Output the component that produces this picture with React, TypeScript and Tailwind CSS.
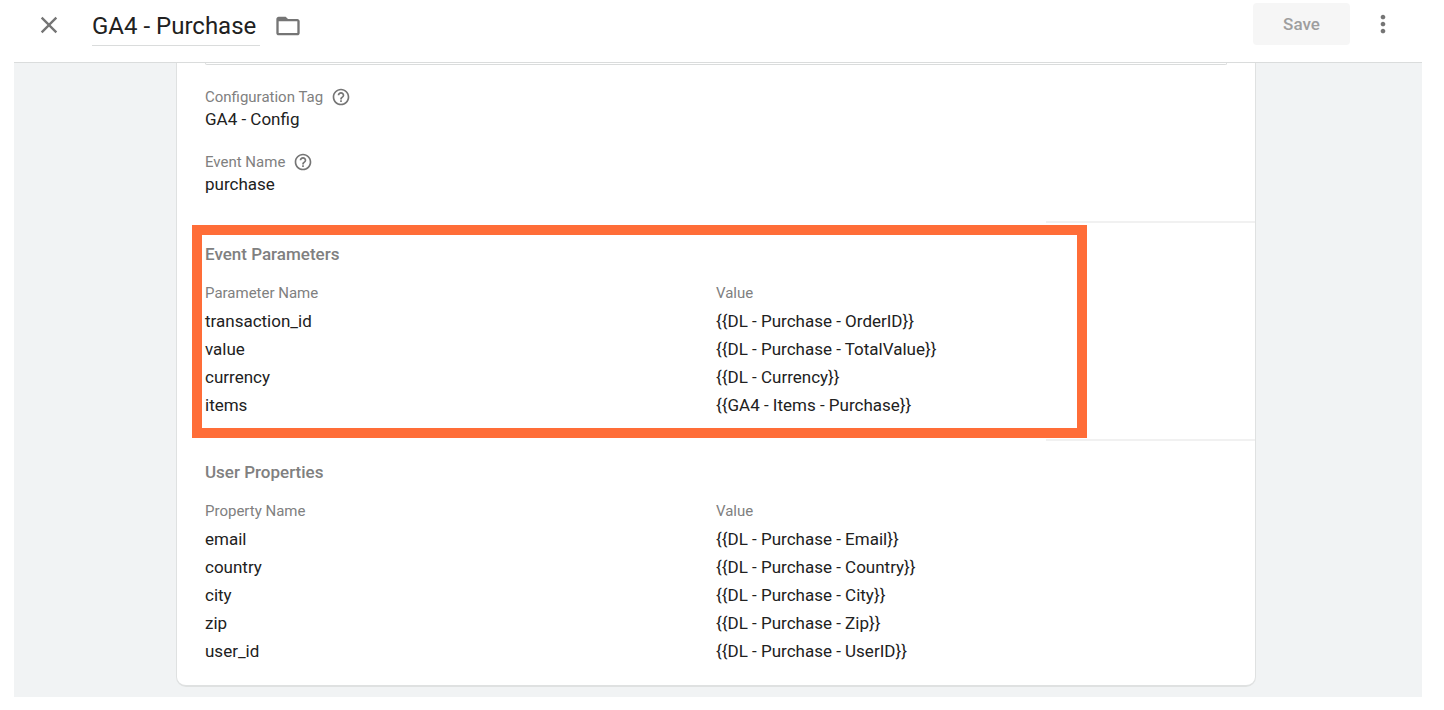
import React from 'react';
import { MdClose, MdFolderOpen, MdHelpOutline, MdMoreVert } from 'react-icons/md';

interface Row {
  name: string;
  value: string;
}

interface FieldProps {
  label: string;
  value: string;
}

interface ParamTableProps {
  title: string;
  nameHeader: string;
  rows: Row[];
}

const eventParameters: Row[] = [
  { name: 'transaction_id', value: '{{DL - Purchase - OrderID}}' },
  { name: 'value', value: '{{DL - Purchase - TotalValue}}' },
  { name: 'currency', value: '{{DL - Currency}}' },
  { name: 'items', value: '{{GA4 - Items - Purchase}}' },
];

const userProperties: Row[] = [
  { name: 'email', value: '{{DL - Purchase - Email}}' },
  { name: 'country', value: '{{DL - Purchase - Country}}' },
  { name: 'city', value: '{{DL - Purchase - City}}' },
  { name: 'zip', value: '{{DL - Purchase - Zip}}' },
  { name: 'user_id', value: '{{DL - Purchase - UserID}}' },
];

const Field: React.FC<FieldProps> = ({ label, value }) => {
  return (
    <div>
      <dt className="flex h-5 items-center gap-2 text-[15px] leading-5 text-[#808080]">
        {label}
        <button type="button" aria-label={`Help: ${label}`} className="text-[#757575]">
          <MdHelpOutline className="size-5" />
        </button>
      </dt>
      <dd className="text-[17px] leading-6">{value}</dd>
    </div>
  );
};

const ParamTable: React.FC<ParamTableProps> = ({ title, nameHeader, rows }) => {
  return (
    <div className="px-7 pt-[19px] pb-5">
      <h2 className="mb-[17px] text-[17px] leading-6 font-medium text-[#808080]">{title}</h2>
      <table className="w-full table-fixed text-left" aria-label={title}>
        <thead>
          <tr className="h-6 align-top text-[15px] leading-5 text-[#808080]">
            <th className="font-normal">{nameHeader}</th>
            <th className="font-normal">Value</th>
          </tr>
        </thead>
        <tbody>
          {rows.map((row) => (
            <tr key={row.name} className="text-[17px] leading-7">
              <td>{row.name}</td>
              <td>{row.value}</td>
            </tr>
          ))}
        </tbody>
      </table>
    </div>
  );
};

const Divider = () => <hr className="ml-auto w-[209px] border-t-2 border-[#f1f1f1]" />;

const App: React.FC = () => {
  return (
    <div className="min-h-screen bg-white pr-[22px] pl-[14px] font-[Roboto,sans-serif] text-[#212121]">
      <header className="flex h-[63px] items-start justify-between border-b border-[#dadcdc] pr-[25px] pl-[21px]">
        <div className="flex items-start">
          <button type="button" aria-label="Close" className="mt-[11px] text-[#757575]">
            <MdClose className="size-7" />
          </button>
          <input
            aria-label="Tag name"
            defaultValue="GA4 - Purchase"
            className="mt-[7px] ml-[29px] h-[39px] w-[168px] border-b border-[#dadcdc] text-2xl outline-none"
          />
          <button type="button" aria-label="Move to folder" className="mt-3 ml-3.5 text-[#757575]">
            <MdFolderOpen className="size-7" />
          </button>
        </div>
        <div className="flex items-center gap-[19px] pt-[3px]">
          <button
            type="button"
            disabled
            className="h-[42px] w-[97px] rounded-sm bg-[#f6f6f6] pt-0.5 text-[17px] font-medium text-[#9e9e9e]"
          >
            Save
          </button>
          <button type="button" aria-label="More actions" className="text-[#757575]">
            <MdMoreVert className="size-7" />
          </button>
        </div>
      </header>

      <main className="bg-[#f1f3f4] pr-1 pb-2.5">
        <section className="mx-auto max-w-[1080px] rounded-b-[10px] border-x border-b-2 border-[#dfe1e1] bg-white">
          {/* Lower edge of the tag type box, scrolled under the header */}
          <div className="mx-7 h-0.5 rounded-b-sm border-x border-b border-[#dadcdc]" />

          <dl className="flex flex-col gap-[21px] px-7 pt-[22px] pb-[25px]">
            <Field label="Configuration Tag" value="GA4 - Config" />
            <Field label="Event Name" value="purchase" />
          </dl>

          <Divider />
          <div className="relative">
            <ParamTable title="Event Parameters" nameHeader="Parameter Name" rows={eventParameters} />
            {/* Highlight frame */}
            <div className="pointer-events-none absolute top-0.5 right-[168px] bottom-px left-[15px] border-[10px] border-[#ff6d38]" />
          </div>

          <Divider />
          <ParamTable title="User Properties" nameHeader="Property Name" rows={userProperties} />
        </section>
      </main>
    </div>
  );
};

export default App;
